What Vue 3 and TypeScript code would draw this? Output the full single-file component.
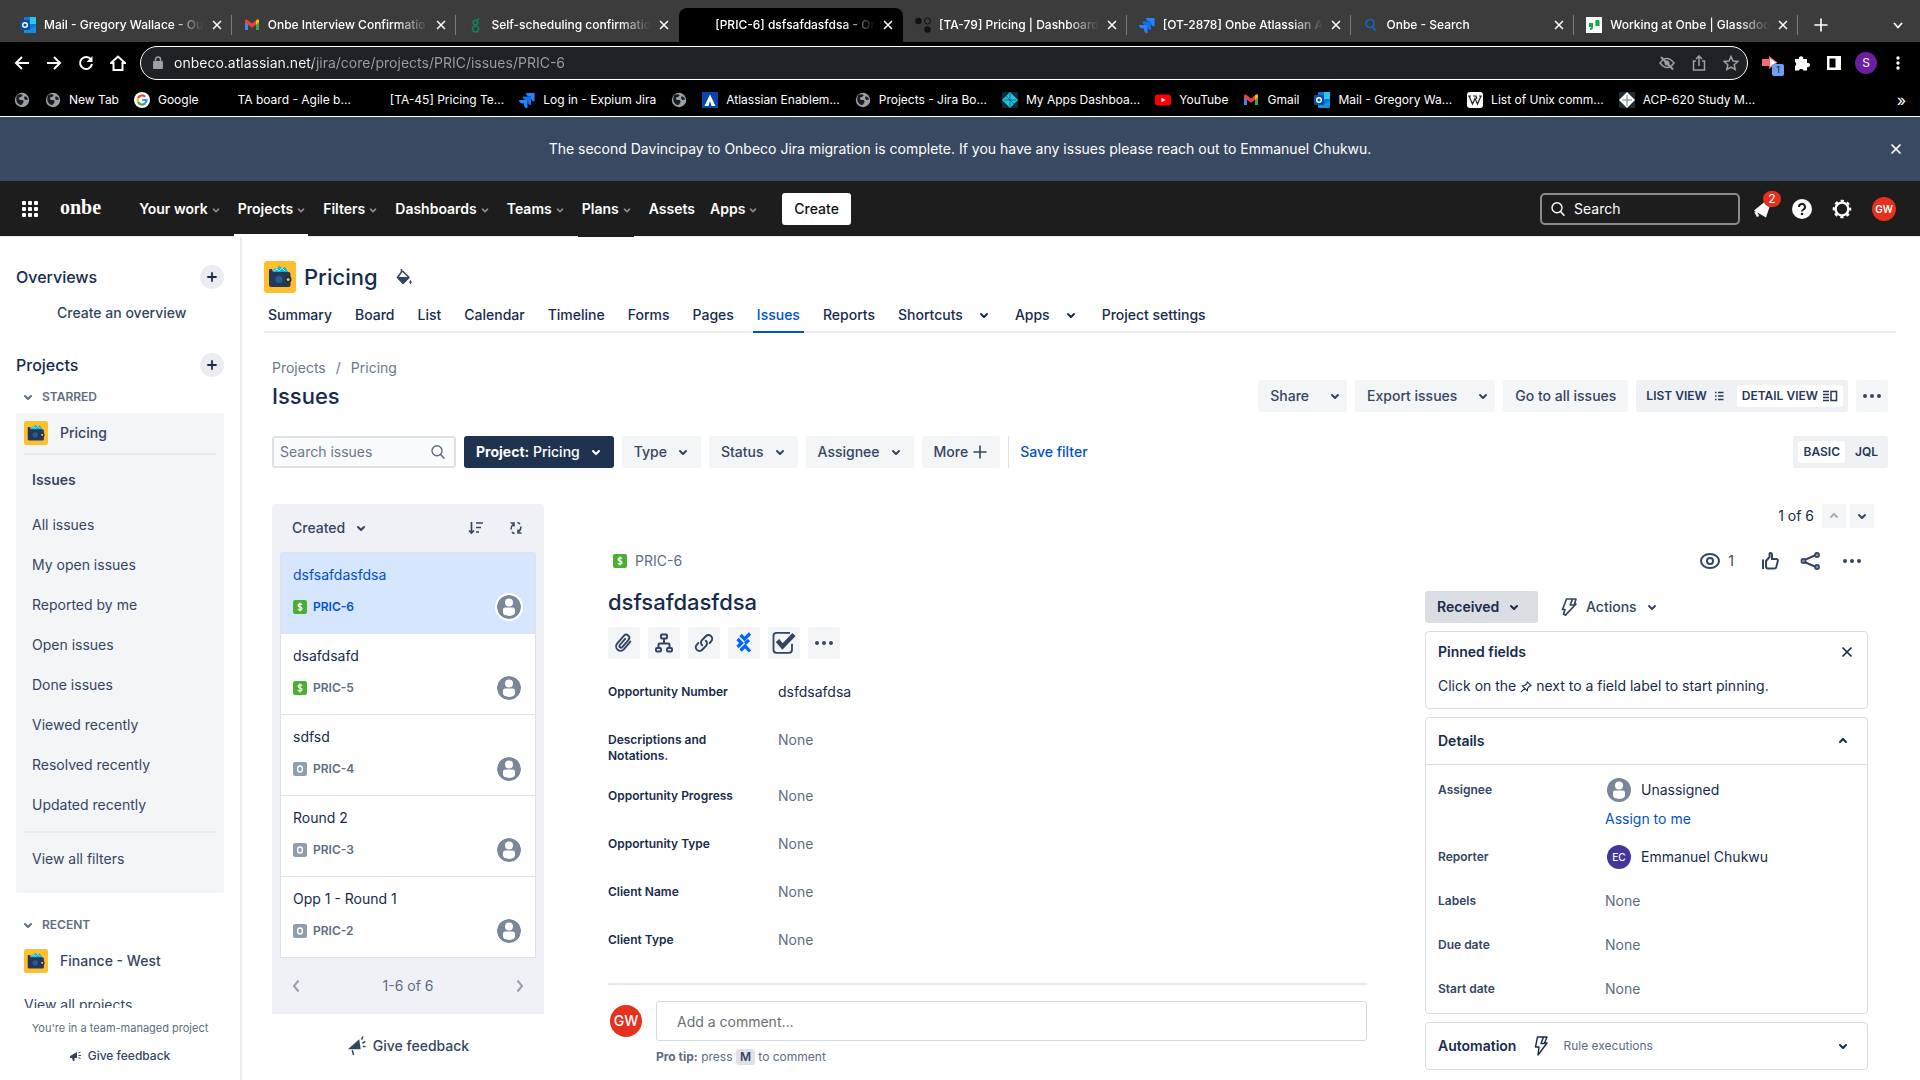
<script setup lang="ts">
interface Tab { title: string; icon: string; active?: boolean; divider?: boolean }
interface Bookmark { title?: string; icon: string }
interface Issue { title: string; key: string; kind: 'paid' | 'opp'; selected?: boolean }
interface Field { label: string; value: string; filled?: boolean }

const tabs: Tab[] = [
  { title: 'Mail - Gregory Wallace - Ou', icon: 'outlook', divider: true },
  { title: 'Onbe Interview Confirmatio', icon: 'gmail', divider: true },
  { title: 'Self-scheduling confirmatio', icon: 'greenhouse' },
  { title: '[PRIC-6] dsfsafdasfdsa - On', icon: 'blank', active: true },
  { title: '[TA-79] Pricing | Dashboard', icon: 'dots', divider: true },
  { title: '[OT-2878] Onbe Atlassian A', icon: 'jira', divider: true },
  { title: 'Onbe - Search', icon: 'bing', divider: true },
  { title: 'Working at Onbe | Glassdoo', icon: 'glassdoor', divider: true },
]

const bookmarks: Bookmark[] = [
  { icon: 'globe' },
  { icon: 'globe', title: 'New Tab' },
  { icon: 'google', title: 'Google' },
  { icon: 'blank', title: 'TA board - Agile b...' },
  { icon: 'blank', title: '[TA-45] Pricing Te...' },
  { icon: 'jira', title: 'Log in - Expium Jira' },
  { icon: 'globe' },
  { icon: 'atlassian', title: 'Atlassian Enablem...' },
  { icon: 'globe', title: 'Projects - Jira Bo...' },
  { icon: 'gem', title: 'My Apps Dashboa...' },
  { icon: 'youtube', title: 'YouTube' },
  { icon: 'gmail', title: 'Gmail' },
  { icon: 'outlook', title: 'Mail - Gregory Wa...' },
  { icon: 'wiki', title: 'List of Unix comm...' },
  { icon: 'gem-white', title: 'ACP-620 Study M...' },
]

const navItems = [
  { label: 'Your work', menu: true },
  { label: 'Projects', menu: true, current: true },
  { label: 'Filters', menu: true },
  { label: 'Dashboards', menu: true },
  { label: 'Teams', menu: true },
  { label: 'Plans', menu: true, hovered: true },
  { label: 'Assets' },
  { label: 'Apps', menu: true },
]

const savedFilters = [
  'All issues', 'My open issues', 'Reported by me', 'Open issues',
  'Done issues', 'Viewed recently', 'Resolved recently', 'Updated recently',
]

const projectTabs = [
  { label: 'Summary' }, { label: 'Board' }, { label: 'List' }, { label: 'Calendar' },
  { label: 'Timeline' }, { label: 'Forms' }, { label: 'Pages' }, { label: 'Issues', current: true },
  { label: 'Reports' }, { label: 'Shortcuts', menu: true }, { label: 'Apps', menu: true },
  { label: 'Project settings' },
]

const issues: Issue[] = [
  { title: 'dsfsafdasfdsa', key: 'PRIC-6', kind: 'paid', selected: true },
  { title: 'dsafdsafd', key: 'PRIC-5', kind: 'paid' },
  { title: 'sdfsd', key: 'PRIC-4', kind: 'opp' },
  { title: 'Round 2', key: 'PRIC-3', kind: 'opp' },
  { title: 'Opp 1 - Round 1', key: 'PRIC-2', kind: 'opp' },
]

const fields: Field[] = [
  { label: 'Opportunity Number', value: 'dsfdsafdsa', filled: true },
  { label: 'Descriptions and Notations.', value: 'None' },
  { label: 'Opportunity Progress', value: 'None' },
  { label: 'Opportunity Type', value: 'None' },
  { label: 'Client Name', value: 'None' },
  { label: 'Client Type', value: 'None' },
]

const quickActions = [
  { icon: 'clip', label: 'Attach' },
  { icon: 'tree', label: 'Add a child issue' },
  { icon: 'link', label: 'Link issue' },
  { icon: 'cross-app', label: 'Open app' },
  { icon: 'checkbox', label: 'Add checklist' },
  { icon: 'more', label: 'More actions' },
]
</script>

<template>
  <svg class="sprite" aria-hidden="true">
    <symbol id="chevron" viewBox="0 0 24 24"><path fill="currentColor" d="M8.292 10.293a1.009 1.009 0 0 0 0 1.419l2.939 2.965c.218.215.5.322.779.322s.556-.107.769-.322l2.93-2.955a1.01 1.01 0 0 0 0-1.419.987.987 0 0 0-1.406 0l-2.298 2.317-2.307-2.327a.99.99 0 0 0-1.406 0z" /></symbol>
    <symbol id="close" viewBox="0 0 16 16"><path d="M3.5 3.5l9 9M12.5 3.5l-9 9" stroke="currentColor" stroke-width="1.7" fill="none" /></symbol>
    <symbol id="plus" viewBox="0 0 16 16"><path d="M8 2v12M2 8h12" stroke="currentColor" stroke-width="1.6" stroke-linecap="round" fill="none" /></symbol>
    <symbol id="plus-bold" viewBox="0 0 10 10"><path d="M5 1v8M1 5h8" stroke="currentColor" stroke-width="1.800" stroke-linecap="round" fill="none" /></symbol>
    <symbol id="search" viewBox="0 0 16 16"><circle cx="7" cy="6.8" r="5" fill="none" stroke="currentColor" stroke-width="1.4" /><path d="M10.6 10.6L14 14.3" stroke="currentColor" stroke-width="1.5" stroke-linecap="round" /></symbol>
    <symbol id="more" viewBox="0 0 24 24"><g fill="currentColor"><circle cx="5" cy="12" r="2" /><circle cx="12" cy="12" r="2" /><circle cx="19" cy="12" r="2" /></g></symbol>
    <symbol id="person" viewBox="0 0 24 24"><circle cx="12" cy="12" r="12" fill="#7a869a" /><circle cx="12" cy="7.6" r="4" fill="#fff" /><path d="M6 14.8a2.3 2.3 0 0 1 2.3-2.3h7.4a2.3 2.3 0 0 1 2.3 2.3v2.7c0 2-2.7 3.4-6 3.4s-6-1.400-6-3.400z" fill="#fff" /></symbol>
    <symbol id="wallet" viewBox="0 0 32 32"><rect width="32" height="32" rx="3" fill="#ffbe2e" /><path d="M7 12l4-5 2 1 2-3 3 2 3-1 4 6z" fill="#13b5d6" /><path d="M10 10l3-2 2 2 3-3 3 3" stroke="#8ff0ff" stroke-width="1" fill="none" /><path d="M5 9.500c0-1 .8-1.500 1.600-1.500H8l1 3h15.500a2 2 0 0 1 2 2v11a2 2 0 0 1-2 2H7a2 2 0 0 1-2-2z" fill="#253858" /><circle cx="15" cy="18.500" r="3.600" fill="#2a5c94" /><rect x="21.500" y="15.500" width="6" height="6" rx="3" fill="#172b4d" /><circle cx="24.200" cy="18.500" r="1.500" fill="#ffbe2e" /></symbol>
    <symbol id="paid" viewBox="0 0 14 14"><rect width="14" height="14" rx="2" fill="#4bae35" /><path d="M9 4.800C8.700 4 8 3.800 7 3.800c-1.100 0-1.900.5-1.900 1.500S6 6.700 7 6.900s2 .6 2 1.600-.9 1.600-2 1.600-1.900-.4-2.100-1.200M7 2.600v8.800" stroke="#fff" stroke-width="1.200" fill="none" /></symbol>
    <symbol id="opp" viewBox="0 0 14 14"><rect width="14" height="14" rx="2" fill="#8f9ead" /><rect x="4.700" y="4" width="4.600" height="6" rx="2.200" stroke="#fff" stroke-width="1.400" fill="none" /></symbol>
    <symbol id="megaphone" viewBox="0 0 20 22"><path d="M0 14.500L12.500 3.500l1.500 11z" fill="currentColor" /><path d="M4.800 15.500l1.400 5.500M15 4l1.500-3.500M16 8l3.200-2M16.500 11.500h3" stroke="currentColor" stroke-width="1.700" fill="none" /></symbol>
    <symbol id="megaphone-small" viewBox="0 0 12 12"><path d="M0 6l7-4v6H0z M2 8h2.500v3H3z" fill="currentColor" /><path d="M8.500 3l2-1M8.500 5.500H11M8.500 7.500l2 1" stroke="currentColor" fill="none" /></symbol>
    <symbol id="clip" viewBox="0 0 24 24"><path d="M18.400 10.600l-6.600 7.700a4.400 4.400 0 0 1-6.700-5.700l6.900-8a3.100 3.100 0 0 1 4.700 4l-6.400 7.500a1.600 1.600 0 0 1-2.500-2.100l5.300-6.200" stroke="currentColor" stroke-width="1.900" stroke-linecap="round" fill="none" /></symbol>
    <symbol id="tree" viewBox="0 0 24 24"><g stroke="currentColor" stroke-width="2" fill="none"><rect x="9" y="3.500" width="6" height="4" rx="1" /><rect x="4" y="17" width="5" height="3.500" rx="1" /><rect x="15" y="17" width="5" height="3.500" rx="1" /><path d="M12 7.500v5M6.500 17v-3.500q0-1 1-1h9q1 0 1 1V17" /></g></symbol>
    <symbol id="link" viewBox="0 0 24 24"><g stroke="currentColor" stroke-width="2" fill="none" stroke-linecap="round"><path d="M10.200 14.300a3.700 3.700 0 0 1-.2-5.200l3.800-3.900a3.700 3.700 0 0 1 5.300 5.200l-1.500 1.700" /><path d="M13.800 9.700a3.700 3.700 0 0 1 .2 5.200l-3.800 3.900a3.700 3.700 0 0 1-5.300-5.200l1.500-1.700" /></g></symbol>
    <symbol id="cross-app" viewBox="0 0 24 24"><path d="M8.500 4l4 4 5.500-5.500M18 20.500l-5-5.500-4.500 4.500M5.500 8l4 4-4 4M17 9l-4 3.500" stroke="#0065ff" stroke-width="3.200" fill="none" /></symbol>
    <symbol id="checkbox" viewBox="0 0 24 24"><path d="M18 1.800H4.500a3 3 0 0 0-3 3v14a3 3 0 0 0 3 3h12.500a3 3 0 0 0 3-3v-6" stroke="currentColor" stroke-width="1.800" fill="none" /><path d="M5.500 9.500l5 6L22 3.500" stroke="currentColor" stroke-width="4.500" fill="none" /></symbol>
    <symbol id="bolt" viewBox="0 0 20 20"><path d="M7.500 2h9.500l-1.500 5H17L6.500 18.200 4.500 17 6 12.500H3.500zM13.500 2l-2.300 6h4" stroke="currentColor" stroke-width="1.700" stroke-linejoin="round" fill="none" /></symbol>
    <symbol id="globe" viewBox="0 0 16 16"><circle cx="8" cy="8" r="7.200" fill="#9aa0a6" /><path d="M3 3.500C5 1.500 8 2 8.500 3S7 5 5.500 5.500 5 8 7.500 8s2.500 2 1.500 3-1 2.500-2.500 2C3.500 12 1.500 9 2.500 5z" fill="#1c1d1f" /><path d="M10.500 4.500c1.500 0 3 .5 3.500 3l-2.500.5c-1-.5-2-2-1-3.500z" fill="#1c1d1f" /></symbol>
    <symbol id="google" viewBox="0 0 16 16"><circle cx="8" cy="8" r="8" fill="#fff" /><g fill="none" stroke-width="2.200"><path d="M11.200 4.700A4.500 4.500 0 0 0 4 6" stroke="#ea4335" /><path d="M4 6a4.500 4.500 0 0 0 0 4.100" stroke="#fbbc05" /><path d="M4 10.100a4.500 4.500 0 0 0 7 1.300" stroke="#34a853" /><path d="M11 11.400A4.400 4.400 0 0 0 12.500 8H8.200" stroke="#4285f4" /></g></symbol>
    <symbol id="outlook" viewBox="0 0 16 16"><rect x="4" y="0" width="12" height="15" rx="1" fill="#0f78d4" /><path d="M10 0h5a1 1 0 0 1 1 1v6h-6z" fill="#28c8f5" /><path d="M4 9l6 3 6-3v6a1 1 0 0 1-1 1H5a1 1 0 0 1-1-1z" fill="#1490df" /><rect y="3" width="10" height="10" rx="1" fill="#0a4ea2" /><circle cx="5" cy="8" r="2.300" fill="none" stroke="#fff" stroke-width="1.400" /></symbol>
    <symbol id="gmail" viewBox="0 0 16 16"><path d="M1 4v9h3V7z" fill="#4285f4" /><path d="M15 4v9h-3V7z" fill="#34a853" /><path d="M1 4c0-1.500 1.500-1.800 2.500-1L8 6.500 12.500 3c1-.8 2.500-.5 2.500 1v1.500L8 10.800 1 5.500z" fill="#ea4335" /><path d="M12 3.400l.5-.4c1-.8 2.500-.5 2.500 1v1.500L12 7.700z" fill="#fbbc04" /></symbol>
    <symbol id="greenhouse" viewBox="0 0 16 16"><g stroke="#14805e" stroke-width="1.600" fill="none"><circle cx="7.500" cy="5.500" r="2.300" /><circle cx="7.500" cy="12" r="3" /><path d="M9 3.500q1.500-.5 1.300-2.500" /></g></symbol>
    <symbol id="dots" viewBox="0 0 16 16"><circle cx="3.500" cy="4" r="3.200" fill="#111" /><circle cx="12.500" cy="4" r="3" fill="none" stroke="#111" /><circle cx="12.500" cy="12.500" r="3.200" fill="#111" /></symbol>
    <symbol id="jira" viewBox="0 0 16 16"><path d="M7 1h8.500v8.500A4 4 0 0 1 12 6V4.500h-1.500A4 4 0 0 1 7 1z" fill="#2684ff" /><path d="M3.500 4.500H12V13a4 4 0 0 1-3.500-3.500V8H7a4 4 0 0 1-3.500-3.500z" fill="#1470f0" /><path d="M0 8h8.500v8.500A4 4 0 0 1 5 13v-1.500H3.500A4 4 0 0 1 0 8z" fill="#2684ff" /></symbol>
    <symbol id="bing" viewBox="0 0 16 16"><circle cx="7" cy="6.500" r="4" fill="none" stroke="#0f67b8" stroke-width="1.700" /><path d="M9.500 10l3 3.500" stroke="#0f67b8" stroke-width="2" /></symbol>
    <symbol id="glassdoor" viewBox="0 0 16 16"><rect width="16" height="16" fill="#fff" /><path d="M3 6h4v4c0 2-1 3-3 3v-2c1 0 1-.5 1-1H3zM9.500 3H12c1 0 1.500.5 1.500 1.500V9h-4z" fill="#0caa41" /></symbol>
    <symbol id="atlassian" viewBox="0 0 16 16"><rect width="16" height="16" fill="#0747a6" /><path d="M8 2.500L13.500 14h-4L8 9l-1.500 5h-4z" fill="#fff" /></symbol>
    <symbol id="gem" viewBox="0 0 16 16"><rect width="16" height="16" fill="#0e2b36" /><path d="M8 0l8 8-8 8-8-8z" fill="#1fc3e0" /><path d="M8 1v14M2 8h12M4 4l8 8" stroke="#0e5d70" stroke-width=".8" /></symbol>
    <symbol id="gem-white" viewBox="0 0 16 16"><rect width="16" height="16" fill="#1d2c33" /><path d="M8 0l8 8-8 8-8-8z" fill="#fff" /><path d="M8 3v11M3 8h10" stroke="#6b7f88" stroke-width="1" /></symbol>
    <symbol id="youtube" viewBox="0 0 16 16"><rect y="2.500" width="16" height="11" rx="2.500" fill="#f00" /><path d="M6.500 5.700v4.600l4-2.300z" fill="#fff" /></symbol>
    <symbol id="wiki" viewBox="0 0 16 16"><rect width="16" height="16" rx="3" fill="#fff" /><path d="M2 4l3.500 8L8 6.500l2.500 5.500L14 4M1 4h3M6 4h3l1 3M12 4h3" stroke="#222" stroke-width="1.200" fill="none" /></symbol>
    <symbol id="blank" viewBox="0 0 16 16" />
  </svg>

  <div class="screen">
    <header class="browser">
      <div class="strip">
        <div class="tabs">
          <div v-for="t in tabs" :key="t.title" class="tab" :class="{ active: t.active, divider: t.divider }">
            <svg class="i16"><use :href="'#' + t.icon" /></svg>
            <span class="tab-title">{{ t.title }}</span>
            <button class="plain" aria-label="Close tab"><svg class="i14"><use href="#close" /></svg></button>
          </div>
        </div>
        <div class="strip-end">
          <button class="plain" aria-label="New tab"><svg class="i16"><use href="#plus" /></svg></button>
          <button class="plain" aria-label="Search tabs"><svg class="i16" viewBox="0 0 16 16"><path d="M4 6l4 4.500L12 6" stroke="currentColor" stroke-width="1.800" fill="none" /></svg></button>
        </div>
      </div>

      <div class="toolbar">
        <button class="plain" aria-label="Back"><svg class="i16" viewBox="0 0 16 16"><path d="M15 8H2M8 2L2 8l6 6" class="stroke" /></svg></button>
        <button class="plain" aria-label="Forward"><svg class="i16" viewBox="0 0 16 16"><path d="M1 8h13M8 2l6 6-6 6" class="stroke" /></svg></button>
        <button class="plain" aria-label="Reload"><svg class="i16" viewBox="0 0 16 16"><path d="M13 4.500A6 6 0 1 0 14 9" class="stroke" /><path d="M14.500 1v6h-6z" fill="currentColor" /></svg></button>
        <button class="plain" aria-label="Home"><svg class="i16" viewBox="0 0 16 16"><path d="M3.500 15V8H1l7-6.500L15 8h-2.500v7z" class="stroke" /></svg></button>
        <div class="address">
          <svg class="lock" viewBox="0 0 10 14"><rect y="5" width="10" height="8" rx="1" fill="#9aa0a6" /><path d="M2.500 6V3.500a2.500 2.500 0 0 1 5 0V6" stroke="#9aa0a6" stroke-width="1.500" fill="none" /></svg>
          <input class="url" aria-label="Address" value="onbeco.atlassian.net/jira/core/projects/PRIC/issues/PRIC-6" />
          <svg class="i16" viewBox="0 0 16 16"><path d="M1 8q7-9 14 0-7 9-14 0z" class="stroke thin" /><circle cx="8" cy="8" r="2.500" fill="currentColor" /><path d="M2 2l12 12.500" class="stroke" /></svg>
          <svg class="i16" viewBox="0 0 16 16"><path d="M5 6H2.500v9h11V6H11M8 11V1.500M5 4l3-3 3 3" class="stroke thin" /></svg>
          <svg class="i16" viewBox="0 0 16 16"><path d="M8 1.500l2 4.500 4.800.5-3.600 3.200 1 4.800L8 12l-4.200 2.500 1-4.800L1.200 6.500 6 6z" class="stroke thin" /></svg>
        </div>
        <button class="plain ext" aria-label="Extension, 1 notice"><svg class="i16" viewBox="0 0 16 16"><path d="M0 4h7V1l8.500 6.500L7 14v-3H0z" fill="#f9696e" /><path d="M8 3.500l6 4-6 4z" fill="#fff" /></svg><span class="ext-badge">1</span></button>
        <button class="plain" aria-label="Extensions"><svg class="i16" viewBox="0 0 16 16"><path d="M1 4h4a2.200 2.200 0 1 1 4.200 0H13v4a2.200 2.200 0 1 1 0 4v3.500H9.300a2.200 2.200 0 0 0-4.300 0H1V11a2.200 2.200 0 0 0 0-4z" fill="currentColor" /></svg></button>
        <button class="plain" aria-label="Side panel"><svg class="i16" viewBox="0 0 16 16"><path d="M1 1h14v14H1zM3.500 3.500v9h6v-9z" fill="currentColor" fill-rule="evenodd" /></svg></button>
        <button class="profile" aria-label="Profile">S</button>
        <button class="plain" aria-label="Browser menu"><svg class="i16" viewBox="0 0 16 16"><g fill="currentColor"><circle cx="8" cy="3" r="1.700" /><circle cx="8" cy="8" r="1.700" /><circle cx="8" cy="13" r="1.700" /></g></svg></button>
      </div>

      <nav class="bookmarks" aria-label="Bookmarks">
        <a v-for="(b, n) in bookmarks" :key="n" href="#" :aria-label="b.title || 'Bookmark'"><svg class="i16"><use :href="'#' + b.icon" /></svg><span v-if="b.title">{{ b.title }}</span></a>
        <button class="plain overflow" aria-label="More bookmarks">»</button>
      </nav>
    </header>

    <div class="banner" role="status">
      <p>The second Davincipay to Onbeco Jira migration is complete. If you have any issues please reach out to Emmanuel Chukwu.</p>
      <button class="plain" aria-label="Dismiss"><svg class="i16"><use href="#close" /></svg></button>
    </div>

    <header class="topnav">
      <button class="plain" aria-label="App switcher"><svg class="i16" viewBox="0 0 16 16"><g fill="#fff"><rect v-for="n in 9" :key="n" :x="((n - 1) % 3) * 6" :y="Math.floor((n - 1) / 3) * 6" width="4" height="4" rx="1" /></g></svg></button>
      <a class="logo" href="#">onbe</a>
      <nav class="menu" aria-label="Main">
        <button v-for="m in navItems" :key="m.label" class="menu-item" :class="{ current: m.current, hovered: m.hovered }">
          {{ m.label }}<svg v-if="m.menu" class="chev"><use href="#chevron" /></svg>
        </button>
      </nav>
      <button class="create">Create</button>
      <label class="global-search"><svg class="i16"><use href="#search" /></svg><input type="search" placeholder="Search" aria-label="Search" /></label>
      <button class="plain bell" aria-label="Notifications, 2 new"><svg class="i20" viewBox="0 0 20 20"><path d="M2 11.500L12.500 3l5 5-3.500 10.500z" fill="#fff" /><path d="M3.500 12.500l2.500 5" stroke="#fff" stroke-width="2.500" /></svg><span class="bell-badge">2</span></button>
      <button class="plain" aria-label="Help"><svg class="i20" viewBox="0 0 20 20"><circle cx="10" cy="10" r="10" fill="#fff" /><path d="M7 8a3 3 0 1 1 4.500 2.500c-1 .6-1.500 1-1.500 2" stroke="#1d1d1d" stroke-width="2" fill="none" /><circle cx="10" cy="15" r="1.300" fill="#1d1d1d" /></svg></button>
      <button class="plain" aria-label="Settings"><svg class="i20" viewBox="0 0 20 20"><circle cx="10" cy="10" r="6.400" fill="none" stroke="#fff" stroke-width="2.400" /><circle cx="10" cy="10" r="8.200" fill="none" stroke="#fff" stroke-width="2.200" stroke-dasharray="3.220 3.220" stroke-dashoffset="1.600" /></svg></button>
      <button class="me" aria-label="Your profile">GW</button>
    </header>

    <div class="body">
      <aside class="side">
        <div class="side-scroll">
          <div class="side-head"><h2>Overviews</h2><button class="round" aria-label="Add overview"><svg class="i10"><use href="#plus-bold" /></svg></button></div>
          <a class="overview-link" href="#">Create an overview</a>
          <div class="side-head second"><h2>Projects</h2><button class="round" aria-label="Add project"><svg class="i10"><use href="#plus-bold" /></svg></button></div>
          <button class="group"><svg class="chev"><use href="#chevron" /></svg>STARRED</button>
          <div class="panel">
            <a class="project" href="#"><svg class="i24"><use href="#wallet" /></svg>Pricing</a>
            <hr />
            <h3>Issues</h3>
            <a v-for="f in savedFilters" :key="f" class="filter-link" href="#">{{ f }}</a>
            <hr class="low" />
            <a class="filter-link" href="#">View all filters</a>
          </div>
          <button class="group recent"><svg class="chev"><use href="#chevron" /></svg>RECENT</button>
          <a class="project west" href="#"><svg class="i24"><use href="#wallet" /></svg>Finance - West</a>
          <a class="all-projects" href="#">View all projects</a>
        </div>
        <footer class="side-foot">
          <p>You're in a team-managed project</p>
          <button class="plain"><svg class="i12"><use href="#megaphone-small" /></svg>Give feedback</button>
        </footer>
      </aside>

      <main>
        <div class="project-title">
          <svg class="i32"><use href="#wallet" /></svg>
          <h1>Pricing</h1>
          <svg class="i16 bucket" viewBox="0 0 16 16"><path d="M5.500 0v3l-4 5.500 5.500 6L13 8.500 6.500 2" stroke="currentColor" stroke-width="1.600" fill="none" stroke-linejoin="round" /><path d="M2 8.500h10.500L7 14zM14.500 11.500q1.500 3 0 3t0-3z" fill="currentColor" stroke="currentColor" /></svg>
        </div>
        <nav class="project-tabs" aria-label="Project">
          <a v-for="t in projectTabs" :key="t.label" href="#" :class="{ current: t.current, drop: t.menu }">{{ t.label }}<svg v-if="t.menu" class="chev"><use href="#chevron" /></svg></a>
        </nav>

        <div class="content">
          <nav class="crumbs" aria-label="Breadcrumb"><a href="#">Projects</a><span>/</span><a href="#">Pricing</a></nav>
          <div class="row title-row">
            <h2>Issues</h2>
            <button class="btn split">Share<svg class="chev"><use href="#chevron" /></svg></button>
            <button class="btn split">Export issues<svg class="chev"><use href="#chevron" /></svg></button>
            <button class="btn">Go to all issues</button>
            <div class="toggle">
              <button>LIST VIEW<svg class="i16" viewBox="0 0 16 16"><path d="M4 4.500h1.500M4 8h1.500M4 11.500h1.500M7 4.500h5.500M7 8h5.500M7 11.500h5.500" stroke="currentColor" stroke-width="1.600" /></svg></button>
              <button class="on">DETAIL VIEW<svg class="i16" viewBox="0 0 16 16"><path d="M1 3.500h6M1 6.500h6M1 9.500h6M1 12.500h6M9 3.500h5.500v9H9z" stroke="currentColor" stroke-width="1.500" fill="none" /></svg></button>
            </div>
            <button class="btn square" aria-label="More"><svg class="i24"><use href="#more" /></svg></button>
          </div>
          <div class="row filter-row">
            <label class="issue-search"><input type="search" placeholder="Search issues" aria-label="Search issues" /><svg class="i16"><use href="#search" /></svg></label>
            <button class="btn dark"><span><b>Project:</b> Pricing</span><svg class="chev"><use href="#chevron" /></svg></button>
            <button class="btn">Type<svg class="chev"><use href="#chevron" /></svg></button>
            <button class="btn">Status<svg class="chev"><use href="#chevron" /></svg></button>
            <button class="btn">Assignee<svg class="chev"><use href="#chevron" /></svg></button>
            <button class="btn add">More<svg class="i16"><use href="#plus" /></svg></button>
            <button class="save">Save filter</button>
            <div class="toggle mode"><button class="on">BASIC</button><button>JQL</button></div>
          </div>

          <div class="columns">
            <section class="list-col" aria-label="Issue list">
              <div class="list">
                <div class="list-head">
                  <button class="plain sort">Created<svg class="chev"><use href="#chevron" /></svg></button>
                  <button class="plain" aria-label="Sort order"><svg class="i16" viewBox="0 0 16 16"><path d="M3.500 2v11M1 10.500L3.500 13 6 10.500M8 3h7M8 7.500h5M8 12h3" stroke="currentColor" stroke-width="1.700" fill="none" /></svg></button>
                  <button class="plain" aria-label="Refresh"><svg class="i16" viewBox="0 0 16 16"><path d="M6.500 13.500A4.500 4.500 0 0 1 4 12M3 9.500C3 7 3.800 5.500 5.500 4M9.500 2.500A4.500 4.500 0 0 1 12 4M13 6.500c0 2.500-.8 4-2.500 5.500" stroke="currentColor" stroke-width="1.600" fill="none" /><path d="M2.500 3H6v3.500M13.500 13H10V9.500" stroke="currentColor" stroke-width="1.600" fill="none" /></svg></button>
                </div>
                <ul>
                  <li v-for="it in issues" :key="it.key" :class="{ selected: it.selected }">
                    <a href="#">
                      <span class="issue-title">{{ it.title }}</span>
                      <span class="issue-meta"><svg class="i14"><use :href="'#' + it.kind" /></svg><span class="key">{{ it.key }}</span><svg class="person"><use href="#person" /></svg></span>
                    </a>
                  </li>
                </ul>
                <div class="pager">
                  <button class="plain" aria-label="Previous page"><svg class="i16" viewBox="0 0 16 16"><path d="M10.500 2.500L6 8l4.500 5.500" class="stroke" /></svg></button>
                  <span>1-6 of 6</span>
                  <button class="plain" aria-label="Next page"><svg class="i16" viewBox="0 0 16 16"><path d="M5.500 2.500L10 8l-4.500 5.500" class="stroke" /></svg></button>
                </div>
              </div>
              <button class="plain feedback"><svg class="i20"><use href="#megaphone" /></svg>Give feedback</button>
            </section>

            <section class="detail" aria-label="Issue">
              <div class="position">
                <span>1 of 6</span>
                <button class="step off" aria-label="Previous issue"><svg class="chev up"><use href="#chevron" /></svg></button>
                <button class="step" aria-label="Next issue"><svg class="chev"><use href="#chevron" /></svg></button>
              </div>
              <div class="detail-cols">
                <div class="left">
                  <a class="issue-key" href="#"><svg class="i14"><use href="#paid" /></svg>PRIC-6</a>
                  <h2>dsfsafdasfdsa</h2>
                  <div class="quick"><button v-for="q in quickActions" :key="q.icon" class="btn square" :aria-label="q.label"><svg class="i24"><use :href="'#' + q.icon" /></svg></button></div>
                  <dl class="fields">
                    <div v-for="f in fields" :key="f.label"><dt>{{ f.label }}</dt><dd :class="{ filled: f.filled }">{{ f.value }}</dd></div>
                  </dl>
                  <div class="comment">
                    <span class="avatar">GW</span>
                    <div class="comment-body">
                      <input type="text" placeholder="Add a comment…" aria-label="Add a comment" />
                      <p><b>Pro tip:</b> press <kbd>M</kbd> to comment</p>
                    </div>
                  </div>
                </div>

                <div class="right">
                  <div class="issue-icons">
                    <button class="plain watch"><svg class="i20" viewBox="0 0 20 20"><ellipse cx="10" cy="10" rx="9" ry="7" class="stroke" /><circle cx="10" cy="10" r="3" class="stroke" /></svg>1</button>
                    <button class="plain" aria-label="Vote"><svg class="i20" viewBox="0 0 20 20"><path d="M3 8.500v9.500M6 10l3.500-4V3c0-1.500 2.500-1.500 2.500.5V8h4.500c1.500 0 1.500 1.500 1.200 2.500l-1.400 5.500c-.3 1-.8 1.500-1.800 1.500H8q-2 0-2-2z" class="stroke" /></svg></button>
                    <button class="plain" aria-label="Share"><svg class="i20" viewBox="0 0 20 20"><path d="M4.500 9L16 4M4.500 11L16 16" class="stroke" /><g fill="#8993a4" stroke="currentColor" stroke-width="1.600"><circle cx="3.500" cy="10" r="2.100" /><circle cx="17" cy="4" r="2.100" /><circle cx="17" cy="16" r="2.100" /></g></svg></button>
                    <button class="plain" aria-label="More"><svg class="i24"><use href="#more" /></svg></button>
                  </div>
                  <div class="status-row">
                    <button class="status">Received<svg class="chev"><use href="#chevron" /></svg></button>
                    <button class="plain actions"><svg class="i20"><use href="#bolt" /></svg>Actions<svg class="chev"><use href="#chevron" /></svg></button>
                  </div>
                  <section class="card pinned">
                    <div class="pinned-head"><h3>Pinned fields</h3><button class="plain" aria-label="Close"><svg class="i16"><use href="#close" /></svg></button></div>
                    <p>Click on the <svg class="pin" viewBox="0 0 14 14"><path d="M8.500 1L13 5.500 11 6 8.800 8.500 8.500 11.500l-6-6 3-.3L8 3zM5.500 8.500L1 13" stroke="currentColor" stroke-width="1.300" fill="none" stroke-linejoin="round" /></svg> next to a field label to start pinning.</p>
                  </section>
                  <section class="card">
                    <div class="card-head"><h3>Details</h3><button class="plain" aria-label="Collapse"><svg class="chev up"><use href="#chevron" /></svg></button></div>
                    <dl class="details">
                      <div><dt>Assignee</dt><dd><span class="who dark-text"><svg class="i24"><use href="#person" /></svg>Unassigned</span><a class="assign" href="#">Assign to me</a></dd></div>
                      <div><dt>Reporter</dt><dd><span class="who dark-text"><span class="avatar small">EC</span>Emmanuel Chukwu</span></dd></div>
                      <div><dt>Labels</dt><dd>None</dd></div>
                      <div><dt>Due date</dt><dd>None</dd></div>
                      <div><dt>Start date</dt><dd>None</dd></div>
                    </dl>
                  </section>
                  <section class="card automation">
                    <h3>Automation</h3>
                    <svg class="i20" viewBox="0 0 20 20"><path d="M5.500 1h9.500l-2.500 6H15L6 19l1-8H3.500zM11.500 1L9 7.500h3.500" stroke="currentColor" stroke-width="1.400" fill="none" stroke-linejoin="round" /></svg>
                    <span>Rule executions</span>
                    <button class="plain" aria-label="Expand"><svg class="chev"><use href="#chevron" /></svg></button>
                  </section>
                </div>
              </div>
            </section>
          </div>
        </div>
      </main>
    </div>
  </div>
</template>

<style>
body { background: #fff; }
</style>

<style scoped>
.sprite { position: absolute; width: 0; height: 0; }
.screen, .screen * { box-sizing: border-box; }
.screen { height: 100vh; display: flex; flex-direction: column; overflow: hidden; font-family: Inter, "Liberation Sans", sans-serif; font-size: 14px; line-height: 20px; color: #172b4d; }
.screen h1, .screen h2, .screen h3, .screen p, .screen dl, .screen dd, .screen ul { margin: 0; padding: 0; }
a { color: inherit; text-decoration: none; }
button, input { font: inherit; color: inherit; border: 0; margin: 0; padding: 0; background: none; }
button { display: flex; align-items: center; flex: none; white-space: nowrap; }
svg { display: block; flex: none; }
input::-webkit-search-cancel-button { display: none; }
.i10 { width: 10px; height: 10px; }
.i12 { width: 12px; height: 12px; }
.i14 { width: 14px; height: 14px; }
.i16 { width: 16px; height: 16px; }
.i20 { width: 20px; height: 20px; }
.i24 { width: 24px; height: 24px; }
.i32 { width: 32px; height: 32px; }
.chev { width: 24px; height: 24px; }
.up { transform: rotate(180deg); }
.stroke { fill: none; stroke: currentColor; stroke-width: 2; }
.thin { stroke-width: 1.5; }

.browser { flex: none; background: #000; color: #fff; font-size: 12px; border-bottom: 1px solid #fff; }
.strip { display: flex; height: 42px; padding: 8px 14px 0 8px; background: #3c3c3c; }
.tabs { flex: 1; display: flex; min-width: 0; }
.tab { position: relative; flex: 1 1 0; min-width: 0; display: flex; align-items: center; padding: 0 8px 0 12px; }
.tab.active { background: #000; border-radius: 8px 8px 0 0; }
.tab.divider::after { content: ""; position: absolute; right: 0; top: 7px; height: 20px; width: 1px; background: #7a7a7a; }
.tab-title { flex: 1; min-width: 0; margin: 0 6px 0 8px; overflow: hidden; white-space: nowrap; font-weight: 500; mask-image: linear-gradient(to right, #000 80%, transparent); }
.strip-end { display: flex; justify-content: space-between; width: 108px; padding-left: 15px; }
.toolbar { display: flex; align-items: center; gap: 16px; height: 42px; padding: 0 14px; }
.address { flex: 1; display: flex; align-items: center; gap: 16px; height: 34px; margin: 0 -2px; padding: 0 8px 0 12px; border: 1px solid #fff; border-radius: 17px; background: #202124; color: #9aa0a6; }
.lock { width: 10px; height: 14px; }
.url { flex: 1; font-size: 14px; margin-left: -5px; color: transparent; background: linear-gradient(to right, #fff 139px, #9aa0a6 139px); background-clip: text; -webkit-background-clip: text; }
.ext { position: relative; }
.ext-badge { position: absolute; left: 10px; top: 9px; width: 12px; height: 12px; border-radius: 2px; background: #6ea0f5; color: #123; font-size: 9px; line-height: 12px; text-align: center; }
.profile { width: 22px; height: 22px; margin: 0 -3px; border-radius: 50%; background: #6b1fa0; justify-content: center; }
.bookmarks { display: flex; align-items: center; gap: 15px; height: 32px; padding: 0 14px; }
.bookmarks a { display: flex; align-items: center; gap: 8px; white-space: nowrap; }
.overflow { margin-left: auto; font-size: 16px; }

.banner { flex: none; display: flex; align-items: center; height: 64px; padding: 0 16px 0 32px; background: #3a4962; color: #fff; }
.banner p { flex: 1; text-align: center; }

.topnav { flex: none; display: flex; align-items: center; height: 56px; padding: 0 24px 0 22px; background: #1d1d1d; color: #fff; border-bottom: 1px solid #ebecf0; }
.logo { margin: 0 34px 4px 22px; font: bold 20px/20px "Liberation Serif", serif; }
.menu { display: flex; align-self: stretch; gap: 11px; margin-bottom: -1px; }
.menu-item { font-weight: 600; padding: 0 0 0 4px; border-bottom: 3px solid transparent; border-top: 3px solid transparent; }
.menu-item .chev { width: 20px; height: 24px; margin: 2px -3px 0 -2px; color: #8c8c8c; }
.menu-item.current { border-bottom-color: #fff; }
.menu-item.hovered { border-bottom-color: #1d1d1d; }
.create { height: 32px; margin-left: 22px; padding: 0 12px; border-radius: 3px; background: #fff; color: #111; font-weight: 500; }
.global-search { display: flex; align-items: center; gap: 8px; width: 200px; height: 32px; margin: 0 12px 0 auto; padding: 0 8px; border: 2px solid #8c8c8c; border-radius: 5px; }
.global-search input { flex: 1; min-width: 0; }
.global-search input::placeholder { color: #fff; opacity: 1; }
.topnav > .plain + .plain { margin-left: 20px; }
.bell { position: relative; }
.bell-badge { position: absolute; left: 11px; top: -8px; width: 18px; height: 16px; border-radius: 8px; background: #e5311d; font-size: 12px; line-height: 16px; text-align: center; }
.me { width: 24px; height: 24px; margin-left: 20px; border-radius: 50%; background: #e5311d; justify-content: center; font-size: 10px; font-weight: 600; }

.body { flex: 1; min-height: 0; display: flex; }
.side { flex: 0 0 242px; display: flex; flex-direction: column; border-right: 2px solid #ebecf0; color: #344563; }
.side-scroll { flex: 1; min-height: 0; overflow: hidden; padding: 28px 16px 0; }
.side-head { display: flex; justify-content: space-between; align-items: center; height: 24px; }
.side-head.second { margin-top: 28px; }
.side-head h2 { font-size: 16px; font-weight: 500; color: #172b4d; }
.round { width: 24px; height: 24px; border-radius: 50%; background: #ebecf0; color: #172b4d; justify-content: center; }
.overview-link { display: block; margin-top: 12px; padding-left: 41px; line-height: 24px; font-weight: 500; }
.group { height: 16px; margin: 12px 0 8px; font-size: 12px; font-weight: 600; color: #5e6c84; }
.group .chev { margin-right: 2px; }
.panel { padding: 8px 8px 14px; background: #f4f5f7; border-radius: 3px; }
.project { display: flex; align-items: center; gap: 12px; height: 24px; font-weight: 500; }
.panel hr { height: 2px; margin: 8px 0 5px; border: 0; background: #ebecf0; }
.panel hr.low { margin: 6px 0; }
.panel h3 { padding-left: 8px; margin-bottom: 5px; font-size: 14px; line-height: 40px; font-weight: 600; }
.filter-link { display: block; padding-left: 8px; line-height: 40px; }
.group.recent { margin: 24px 0 16px; }
.west { padding-left: 8px; }
.all-projects { display: block; margin: 22px 0 0 8px; white-space: nowrap; }
.side-foot { flex: none; display: flex; flex-direction: column; align-items: center; gap: 12px; padding: 12px 0 16px; background: #fff; font-size: 12px; line-height: 16px; color: #5e6c84; }
.side-foot p { font-size: 11px; }
.side-foot button { gap: 6px; font-weight: 500; color: #344563; }

main { flex: 1; min-width: 0; padding: 24px 24px 0 22px; }
.project-title { display: flex; align-items: center; height: 32px; }
.project-title h1 { margin: 0 18px 0 8px; font-size: 22px; font-weight: 500; line-height: 32px; }
.bucket { color: #344563; }
.project-tabs { display: flex; gap: 15px; height: 40px; box-shadow: inset 0 -2px #ebecf0; font-weight: 500; }
.project-tabs a { display: flex; align-items: center; padding: 6px 4px 0; border-bottom: 2px solid transparent; white-space: nowrap; }
.project-tabs .current { color: #0052cc; border-color: #0052cc; }
.project-tabs .chev { margin-left: 9px; }
.project-tabs .drop { padding-right: 0; }
.content { padding: 25px 8px 0; }
.crumbs { display: flex; gap: 10px; height: 22px; color: #6b778c; }
.row { display: flex; align-items: center; gap: 8px; height: 32px; }
.title-row h2 { margin-right: auto; font-size: 22px; font-weight: 500; line-height: 24px; }
.btn { height: 32px; padding: 0 12px; border-radius: 3px; background: #f4f5f7; color: #344563; font-weight: 500; }
.btn .chev { margin: 0 -6px 0 4px; }
.btn.split { padding-right: 6px; }
.btn.split .chev { margin: 0 -6px 0 14px; }
.btn.square { width: 32px; padding: 0; justify-content: center; }
.btn.dark { background: #1f3250; color: #fff; }
.btn.add { gap: 4px; }
.toggle { display: flex; align-items: center; height: 32px; padding: 0 5px; border-radius: 3px; background: #f0f1f5; font-size: 12px; }
.toggle button { height: 22px; padding: 0 5px; border-radius: 3px; font-weight: 600; line-height: 16px; color: #253858; }
.toggle button + button { margin-left: 5px; }
.toggle .i16 { margin-left: 4px; }
.toggle .on { background: #fff; }
.filter-row { margin-top: 24px; }
.issue-search { display: flex; align-items: center; width: 184px; height: 32px; padding: 0 8px 0 6px; border: 2px solid #dfe1e6; border-radius: 3px; background: #fafbfc; color: #5e6c84; }
.issue-search input { flex: 1; min-width: 0; }
.issue-search input::placeholder { color: #6b778c; opacity: 1; }
.save { height: 32px; padding-left: 11px; border-left: 1px solid #dfe1e6; color: #0052cc; font-weight: 500; }
.mode { margin-left: auto; }

.columns { display: flex; gap: 64px; margin-top: 36px; }
.list-col { flex: 0 0 272px; display: flex; flex-direction: column; align-items: center; gap: 22px; }
.list { align-self: stretch; padding: 0 8px; background: #f0f1f6; border-radius: 3px 3px 0 0; }
.list-head { display: flex; align-items: center; gap: 24px; height: 48px; padding: 0 12px; color: #344563; }
.sort { margin-right: auto; font-weight: 500; }
.sort .chev { margin-left: 4px; }
.list ul { list-style: none; border: 1px solid #dfe1e6; border-bottom: 0; border-radius: 3px 3px 0 0; }
.list li { height: 81px; padding: 12px; border-bottom: 1px solid #dfe1e6; background: #fff; }
.list li.selected { background: #d6e6ff; color: #0052cc; }
.issue-title { display: block; margin-bottom: 10px; }
.issue-meta { display: flex; align-items: center; height: 24px; }
.key { flex: 1; margin-left: 6px; font-size: 12px; font-weight: 600; color: #5e6c84; }
.selected .key { color: #0052cc; }
.person { width: 28px; height: 28px; padding: 2px; border-radius: 50%; background: #fff; }
.pager { display: flex; align-items: center; justify-content: space-between; height: 56px; padding: 0 8px; color: #5e6c84; }
.pager .plain { color: #97a0af; }
.feedback { gap: 6px; font-weight: 500; color: #344563; }

.detail { flex: 1; min-width: 0; }
.position { display: flex; justify-content: flex-end; align-items: center; gap: 4px; height: 24px; margin-right: 14px; }
.position span { margin-right: 4px; }
.step { width: 24px; height: 24px; border-radius: 3px; background: #f4f5f7; color: #344563; }
.step.off { color: #a5adba; }
.detail-cols { display: flex; gap: 58px; padding: 17px 20px 0 0; }
.left { flex: 1; min-width: 0; padding-top: 6px; }
.issue-key { display: flex; align-items: center; gap: 8px; padding-left: 5px; color: #5e6c84; }
.left h2 { margin: 17px 0 11px; font-size: 22px; line-height: 28px; font-weight: 500; }
.quick { display: flex; gap: 8px; }
.fields { padding: 25px 0 3px !important; border-bottom: 2px solid #e6e8ee; }
.fields div { display: flex; margin-bottom: 24px; min-height: 24px; line-height: 16px; }
.fields dt { flex: 0 0 170px; padding-right: 40px; font-size: 12px; font-weight: 600; }
.fields dd { color: #5e6c84; }
.fields .filled { color: #172b4d; }
.comment { display: flex; gap: 14px; padding: 16px 0 0 2px; }
.avatar { display: flex; align-items: center; justify-content: center; flex: none; width: 32px; height: 32px; margin-top: 4px; border-radius: 50%; background: #e5311d; color: #fff; font-weight: 500; }
.comment-body { flex: 1; }
.comment input { display: block; width: 100%; height: 40px; padding: 0 20px; border: 1px solid #d5d9e0; border-radius: 3px; background: #fff; }
.comment input::placeholder { color: #6b6e76; opacity: 1; }
.comment p { margin-top: 8px; font-size: 12px; line-height: 16px; color: #5e6c84; }
kbd { display: inline-block; padding: 0 4px; border-radius: 3px; background: #dfe1e6; font: inherit; font-weight: 600; color: #344563; }

.right { flex: 0 0 443px; }
.issue-icons { display: flex; align-items: center; justify-content: flex-end; gap: 20px; height: 32px; padding-right: 4px; color: #344563; }
.watch { gap: 8px; margin-right: 6px; }
.status-row { display: flex; margin: 14px 0 8px; }
.status { width: 113px; height: 32px; padding-left: 12px; border-radius: 3px; background: #dadde2; color: #172b4d; font-weight: 600; }
.status .chev { margin-left: 3px; }
.actions { margin-left: 21px; font-weight: 500; color: #344563; }
.actions .i20 { margin-right: 7px; }
.actions .chev { margin-left: 3px; }
.card { margin-bottom: 8px; border: 1px solid #d9dce3; border-radius: 4px; }
.card h3 { font-size: 14px; font-weight: 600; }
.pinned { padding: 10px 12px 12px; }
.pinned-head { display: flex; justify-content: space-between; margin-bottom: 14px; }
.pin { display: inline-block; width: 12px; height: 12px; vertical-align: -2px; }
.card-head { display: flex; align-items: center; justify-content: space-between; height: 47px; padding: 0 12px; border-bottom: 1px solid #d9dce3; }
.details { padding: 11px 12px 10px !important; }
.details > div { display: flex; margin-bottom: 16px; }
.details > div:first-child { margin-bottom: 14px; }
.details > div:last-child { margin: 0; }
.details dt { flex: 0 0 167px; font-size: 12px; font-weight: 600; line-height: 28px; color: #344563; }
.details dd { line-height: 28px; color: #5e6c84; }
.who { display: flex; align-items: center; gap: 10px; padding-left: 2px; }
.dark-text { color: #172b4d; }
.assign { display: block; margin-top: 5px; line-height: 20px; color: #0052cc; }
.small { width: 24px; height: 24px; margin: 0; background: #43379c; font-size: 10px; }
.automation { display: flex; align-items: center; height: 48px; padding: 0 12px; margin: 0; }
.automation .i20 { margin: 0 11px 0 16px; }
.automation span { margin-right: auto; font-size: 12px; color: #5e6c84; }
</style>
